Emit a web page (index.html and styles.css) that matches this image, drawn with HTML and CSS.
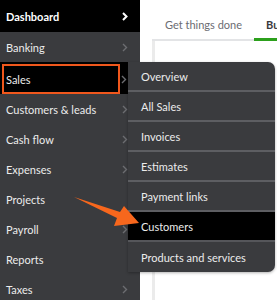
FILE: index.html
```html
<!DOCTYPE html>
<html>
<head>
    <title>Sales menu</title>
    <link rel="stylesheet" href="styles.css">
</head>
<body>
    <div class='app'>
        <div class='sidebar'>
            <div class='item dash'><span>Dashboard</span><svg class='chev' width='6' height='9' viewBox='0 0 6 9'><path d='M1 1 L4.5 4.5 L1 8' /></svg></div>
            <div class='item'><span>Banking</span><svg class='chev' width='6' height='9' viewBox='0 0 6 9'><path d='M1 1 L4.5 4.5 L1 8' /></svg></div>
            <div class='item sales'><span class='box'>Sales</span><svg class='chev' width='6' height='9' viewBox='0 0 6 9'><path d='M1 1 L4.5 4.5 L1 8' /></svg></div>
            <div class='item'><span>Customers &amp; leads</span><svg class='chev' width='6' height='9' viewBox='0 0 6 9'><path d='M1 1 L4.5 4.5 L1 8' /></svg></div>
            <div class='item'><span>Cash flow</span><svg class='chev' width='6' height='9' viewBox='0 0 6 9'><path d='M1 1 L4.5 4.5 L1 8' /></svg></div>
            <div class='item'><span>Expenses</span><svg class='chev' width='6' height='9' viewBox='0 0 6 9'><path d='M1 1 L4.5 4.5 L1 8' /></svg></div>
            <div class='item'><span>Projects</span></div>
            <div class='item'><span>Payroll</span><svg class='chev' width='6' height='9' viewBox='0 0 6 9'><path d='M1 1 L4.5 4.5 L1 8' /></svg></div>
            <div class='item'><span>Reports</span></div>
            <div class='item'><span>Taxes</span><svg class='chev' width='6' height='9' viewBox='0 0 6 9'><path d='M1 1 L4.5 4.5 L1 8' /></svg></div>
        </div>
        <div class='main'>
            <div class='tabs'>
                <div class='tab'>Get things done</div>
                <div class='tab active'>Business overview</div>
            </div>
            <div class='panel'></div>
        </div>
    </div>

    <div class='flyout'>
        <div class='fitem'>Overview</div>
        <div class='fitem'>All Sales</div>
        <div class='fitem'>Invoices</div>
        <div class='fitem'>Estimates</div>
        <div class='fitem'>Payment links</div>
        <div class='fitem current'>Customers</div>
        <div class='fitem last'>Products and services</div>
    </div>

    <svg class='arrow' width='277' height='300' viewBox='0 0 277 300'>
        <polygon points='74,197 120,212 124,206 139,223 114,226 117,218' />
    </svg>
</body>
</html>
```

FILE: styles.css
```css
body {
    margin: 0;
    font-family: Lato, "Open Sans", sans-serif;
    font-size: 11px;
    background-color: #ffffff;
}

.app {
    display: flex;
    width: 277px;
    height: 300px;
    overflow: hidden;
}

.sidebar {
    width: 140px;
    flex-shrink: 0;
    background-color: #3a3b3e;
    color: #ececec;
}

.item {
    height: 30px;
    display: flex;
    align-items: center;
    justify-content: space-between;
    padding: 0 12px 0 6px;
}

.chev {
    fill: none;
    stroke: #6c6d71;
    stroke-width: 1.4;
}

.dash {
    height: 32px;
    background-color: #000000;
    color: #ffffff;
    font-weight: bold;
}

.dash .chev {
    stroke: #ffffff;
    stroke-width: 2;
}

.sales {
    background-color: #000000;
    margin-right: 12px;
    padding: 2px 0 0 2px;
    align-items: stretch;
}

.sales .box {
    width: 118px;
    box-sizing: border-box;
    border: 2px solid #f0571c;
    padding-left: 2px;
    display: flex;
    align-items: center;
}

.sales .chev {
    align-self: center;
    margin-right: 1px;
}

.main {
    flex: 1;
    min-width: 0;
    display: flex;
    flex-direction: column;
    padding-left: 12px;
}

.tabs {
    display: flex;
    margin-top: 18px;
    border-bottom: 2px solid #e3e4e6;
    white-space: nowrap;
}

.tab {
    flex-shrink: 0;
    padding: 0 9px 7px 13px;
    color: #6b6c72;
    margin-bottom: -2px;
    border-bottom: 3px solid transparent;
}

.tab.active {
    color: #393a3d;
    font-weight: bold;
    border-bottom-color: #2ca01c;
    margin-left: 3px;
    padding-left: 12px;
}

.panel {
    flex: 1;
    border-left: 3px solid #ebebeb;
}

.flyout {
    position: absolute;
    left: 128px;
    top: 62px;
    width: 147px;
    background-color: #3a3b3e;
    border-radius: 0 7px 7px 0;
    box-shadow: 0 1px 3px rgba(0, 0, 0, 0.3);
    overflow: hidden;
    color: #ececec;
}

.fitem {
    height: 28px;
    border-bottom: 2px solid #5d5e62;
    display: flex;
    align-items: center;
    padding-left: 13px;
}

.fitem.current {
    background-color: #000000;
    border-bottom-color: #55565a;
}

.fitem.last {
    height: 30px;
    border-bottom: none;
}

.arrow {
    position: absolute;
    left: 0;
    top: 0;
    pointer-events: none;
}

.arrow polygon {
    fill: #f7671d;
}
```
